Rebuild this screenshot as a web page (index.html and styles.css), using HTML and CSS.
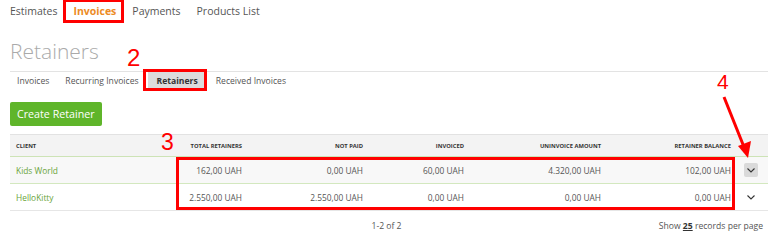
FILE: index.html
```html
<!DOCTYPE html>
<html lang="en">
<head>
  <meta charset="UTF-8" />
  <title>Retainers</title>
  <link rel="stylesheet" href="styles.css">
</head>
<body>

  <!-- Top navigation -->
  <nav class="top-nav">
    <a href="#">Estimates</a>
    <a href="#" class="current">Invoices</a>
    <a href="#">Payments</a>
    <a href="#">Products List</a>
  </nav>

  <h1 class="page-title">Retainers</h1>

  <div class="sub-tabs">
    <a href="#">Invoices</a>
    <a href="#">Recurring Invoices</a>
    <a href="#" class="active">Retainers</a>
    <a href="#">Received Invoices</a>
  </div>

  <div class="toolbar">
    <button class="btn-create">Create Retainer</button>
  </div>

  <table class="retainers">
    <colgroup>
      <col class="c-client"><col class="c-total"><col class="c-notpaid"><col class="c-invoiced"><col class="c-uninv"><col class="c-balance"><col class="c-action">
    </colgroup>
    <thead>
      <tr>
        <th class="left">Client</th>
        <th>Total Retainers</th>
        <th>Not Paid</th>
        <th>Invoiced</th>
        <th>Uninvoice Amount</th>
        <th>Retainer Balance</th>
        <th></th>
      </tr>
    </thead>
    <tbody>
      <tr class="hover">
        <td class="left"><a href="#">Kids World</a></td>
        <td>162,00 UAH</td>
        <td>0,00 UAH</td>
        <td>60,00 UAH</td>
        <td>4.320,00 UAH</td>
        <td>102,00 UAH</td>
        <td class="action"><span class="chev-btn"><svg width="8" height="5" viewBox="0 0 8 5"><path d="M0.5 0.5 L4 4 L7.5 0.5" fill="none" stroke="#333" stroke-width="1.1"/></svg></span></td>
      </tr>
      <tr>
        <td class="left"><a href="#">HelloKitty</a></td>
        <td>2.550,00 UAH</td>
        <td>2.550,00 UAH</td>
        <td>0,00 UAH</td>
        <td>0,00 UAH</td>
        <td>0,00 UAH</td>
        <td class="action"><span class="chev-btn plain"><svg width="8" height="5" viewBox="0 0 8 5"><path d="M0.5 0.5 L4 4 L7.5 0.5" fill="none" stroke="#333" stroke-width="1.1"/></svg></span></td>
      </tr>
    </tbody>
  </table>

  <div class="pager">
    <span></span>
    <span class="count">1-2 of 2</span>
    <span class="per-page">Show <b>25</b> records per page</span>
  </div>

  <!-- Tutorial annotations drawn on top -->
  <div class="notes" aria-hidden="true">
    <div class="box box-invoices"></div>
    <div class="box box-tab"></div>
    <div class="box box-values"></div>
    <span class="num num-2">2</span>
    <span class="num num-3">3</span>
    <span class="num num-4">4</span>
    <svg class="arrow" width="768" height="243" viewBox="0 0 768 243">
      <line x1="724" y1="97" x2="744" y2="147" stroke="#f00" stroke-width="3"/>
      <polygon points="748,158 738,146 751,141" fill="#f00"/>
    </svg>
  </div>

</body>
</html>
```

FILE: styles.css
```css
/* === Global === */
body {
  margin: 0;
  font-family: "Open Sans", Arial, sans-serif;
  color: #555;
  background: #fff;
  position: relative;
  width: 768px;
  height: 243px;
  overflow: hidden;
}

a {
  text-decoration: none;
  color: inherit;
}

/* === Top navigation === */
.top-nav {
  display: flex;
  gap: 16px;
  height: 22px;
  align-items: center;
  padding-left: 10px;
  font-size: 10.5px;
  color: #555;
}

.top-nav a.current {
  color: #ec8b25;
  font-weight: 700;
}

/* === Title & sub tabs === */
.page-title {
  margin: 0 0 0 10px;
  height: 50px;
  box-sizing: border-box;
  padding-top: 16px;
  font-size: 21px;
  font-weight: 300;
  color: #aaa;
  line-height: 26px;
  border-bottom: 1px solid #e3e3e3;
}

.sub-tabs {
  display: flex;
  gap: 2px;
  margin-left: 10px;
  height: 17px;
  font-size: 8.6px;
  color: #555;
}

.sub-tabs a {
  display: flex;
  align-items: center;
  padding: 0 7px;
}

.sub-tabs a.active {
  background: #dcdcdc;
  font-weight: 700;
  color: #333;
  padding: 0 9px;
}

/* === Toolbar === */
.toolbar {
  padding: 13px 0 8px 10px;
}

.btn-create {
  display: block;
  height: 24px;
  padding: 0 7px;
  border: none;
  border-radius: 2px;
  background: #5fb52a;
  color: #fff;
  font-family: inherit;
  font-size: 10.7px;
}

/* === Table === */
.retainers {
  margin-left: 10px;
  width: 758px;
  table-layout: fixed;
  border-collapse: collapse;
  font-size: 8.4px;
}

.c-client { width: 170px; }
.c-total { width: 68px; }
.c-notpaid { width: 121px; }
.c-invoiced { width: 101px; }
.c-uninv { width: 137px; }
.c-balance { width: 130px; }
.c-action { width: 31px; }

.retainers th {
  height: 21px;
  padding: 0 6px;
  text-align: right;
  font-size: 5.8px;
  font-weight: 700;
  text-transform: uppercase;
  color: #333;
  background: #f3f3f3;
  border-top: 1px solid #e2e2e2;
  border-bottom: 1px solid #cde3b6;
}

.retainers td {
  height: 26px;
  padding: 0 6px;
  text-align: right;
  color: #555;
  border-bottom: 1px solid #d3e8bf;
}

.retainers tbody tr:last-child td {
  border-bottom-color: #e6e6e6;
}

.retainers tr.hover td {
  background: #f8f8f8;
}

.retainers .left {
  text-align: left;
}

.retainers td.left a {
  color: #6aa43a;
}

.retainers td.action {
  padding: 0 0 0 7px;
  text-align: left;
}

.chev-btn {
  display: flex;
  align-items: center;
  justify-content: center;
  width: 14px;
  height: 14px;
  border-radius: 2px;
  background: #dadada;
}

.chev-btn.plain {
  background: none;
}

/* === Pager === */
.pager {
  display: grid;
  grid-template-columns: 1fr auto 1fr;
  padding: 9px 5px 0 10px;
  font-size: 8.6px;
  color: #555;
}

.pager .per-page {
  text-align: right;
}

.pager b {
  color: #333;
  text-decoration: underline;
}

/* === Annotations === */
.notes {
  position: absolute;
  inset: 0;
  pointer-events: none;
}

.box {
  position: absolute;
  border: 3px solid #f00;
}

.box-invoices { left: 63px; top: -1px; width: 55px; height: 18px; }
.box-tab { left: 143px; top: 69px; width: 58px; height: 16px; }
.box-values { left: 176px; top: 157px; width: 553px; height: 47px; }

.num {
  position: absolute;
  font-family: "Liberation Sans", Arial, sans-serif;
  color: #f00;
  line-height: 1;
}

.num-2 { left: 127px; top: 46px; font-size: 24px; }
.num-3 { left: 161px; top: 131px; font-size: 23px; }
.num-4 { left: 717px; top: 71px; font-size: 21px; }

.arrow {
  position: absolute;
  left: 0;
  top: 0;
}
```
